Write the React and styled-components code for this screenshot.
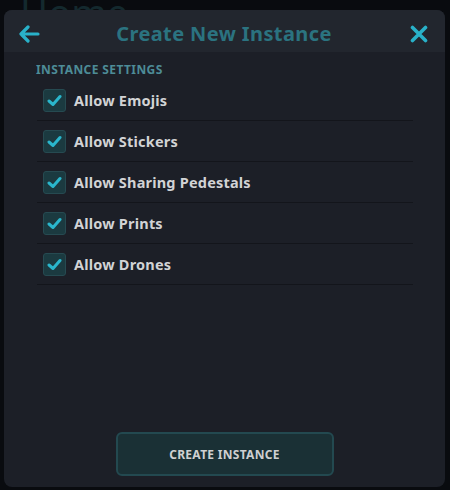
import React, { useState } from 'react';
import styled, { createGlobalStyle } from 'styled-components';

const GlobalStyle = createGlobalStyle`
    html, body {
        margin: 0;
        padding: 0;
        background: #090b0f;
        font-family: "Noto Sans", "Open Sans", sans-serif;
    }
`;

const Page = styled.div`
    position: relative;
    width: 450px;
    height: 490px;
    overflow: hidden;
    background: #090b0f;
`;

const PageTitle = styled.h1`
    margin: 0;
    padding: 0 0 0 20px;
    font-size: 38px;
    font-weight: 400;
    line-height: 36px;
    margin-top: -6px;
    color: #14292e;
`;

const Modal = styled.div`
    position: absolute;
    left: 4px;
    top: 10px;
    width: 441px;
    height: 477px;
    display: flex;
    flex-direction: column;
    background: #1c1f27;
    border-radius: 8px;
    overflow: hidden;
`;

const Header = styled.header`
    height: 42px;
    box-sizing: border-box;
    display: flex;
    align-items: center;
    justify-content: space-between;
    padding: 5px 14px 0 13px;
    background: #22262e;
`;

const IconButton = styled.button`
    width: 24px;
    height: 24px;
    padding: 0;
    border: none;
    background: none;
    display: flex;
    align-items: center;
    justify-content: center;
    cursor: pointer;
`;

const Title = styled.h2`
    margin: 0;
    font-size: 20px;
    font-weight: 700;
    color: #2b7380;
    letter-spacing: 0.4px;
`;

const Content = styled.div`
    flex: 1;
    display: flex;
    flex-direction: column;
    padding: 11px 32px 0 33px;
`;

const SectionLabel = styled.div`
    font-size: 12px;
    font-weight: 700;
    color: #4d8c97;
    letter-spacing: 0.4px;
    line-height: 14px;
    margin-left: -1px;
    margin-bottom: 3px;
`;

const Row = styled.label`
    height: 40px;
    display: flex;
    align-items: center;
    gap: 8px;
    padding-left: 6px;
    border-bottom: 1px solid #13151b;
    cursor: pointer;
`;

const Box = styled.span`
    width: 21px;
    height: 21px;
    display: flex;
    align-items: center;
    justify-content: center;
    background: #1b3a40;
    border: 1px solid #264a51;
    border-radius: 3px;
`;

const RowText = styled.span`
    font-size: 14.5px;
    font-weight: 700;
    color: #d2d3d5;
    letter-spacing: 0.2px;
`;

const Footer = styled.div`
    display: flex;
    justify-content: center;
    padding: 0 0 11px 0;
`;

const CreateButton = styled.button`
    width: 218px;
    height: 44px;
    background: #1a3035;
    border: 2px solid #234950;
    border-radius: 6px;
    color: #cfd0d1;
    font-family: "Noto Sans", "Open Sans", sans-serif;
    font-size: 12px;
    font-weight: 700;
    letter-spacing: 0.3px;
    cursor: pointer;
`;

const Check = () => (
    <svg width="15" height="13" viewBox="0 0 15 13">
        <path d="M2 7 L6 10.5 L13 2.5" fill="none" stroke="#2ab6cc" strokeWidth="3" strokeLinecap="round" strokeLinejoin="round" />
    </svg>
);

const settings = [
    "Allow Emojis",
    "Allow Stickers",
    "Allow Sharing Pedestals",
    "Allow Prints",
    "Allow Drones"
];

function App() {
    const [checked, setChecked] = useState(settings.map(() => true));

    return (
        <Page>
            <GlobalStyle />
            <PageTitle>Home</PageTitle>
            <Modal>
                <Header>
                    <IconButton>
                        <svg width="22" height="18" viewBox="0 0 22 18">
                            <path d="M20 9 H3 M10 2 L3 9 L10 16" fill="none" stroke="#29b1c9" strokeWidth="3.2" strokeLinecap="round" strokeLinejoin="round" />
                        </svg>
                    </IconButton>
                    <Title>Create New Instance</Title>
                    <IconButton>
                        <svg width="18" height="18" viewBox="0 0 18 18">
                            <path d="M2.5 2.5 L15.5 15.5 M15.5 2.5 L2.5 15.5" fill="none" stroke="#29b1c9" strokeWidth="3.6" strokeLinecap="round" />
                        </svg>
                    </IconButton>
                </Header>
                <Content>
                    <SectionLabel>INSTANCE SETTINGS</SectionLabel>
                    {settings.map((s, i) => (
                        <Row key={s} onClick={() => setChecked(c => c.map((v, j) => j === i ? !v : v))}>
                            <Box>{checked[i] && <Check />}</Box>
                            <RowText>{s}</RowText>
                        </Row>
                    ))}
                </Content>
                <Footer>
                    <CreateButton>CREATE INSTANCE</CreateButton>
                </Footer>
            </Modal>
        </Page>
    );
}

export default App;
